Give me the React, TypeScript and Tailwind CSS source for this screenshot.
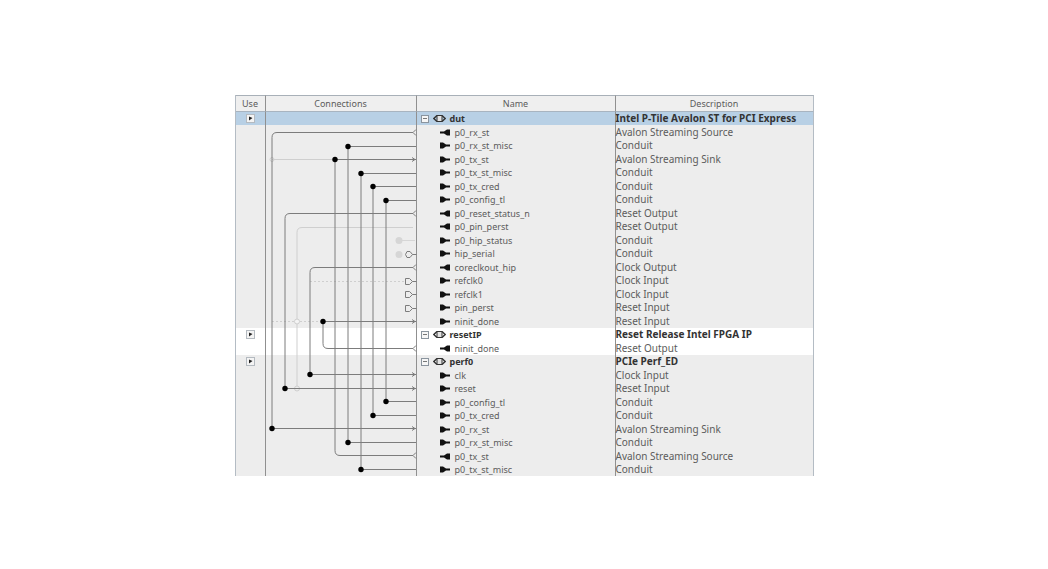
import { useState } from "react";

type Port = { name: string; desc: string; out?: boolean };
type Block = { name: string; desc: string; tone: "selected" | "plain" | "grey"; ports: Port[] };

const source = "Avalon Streaming Source";
const sink = "Avalon Streaming Sink";

const blocks: Block[] = [
  {
    name: "dut",
    desc: "Intel P-Tile Avalon ST for PCI Express",
    tone: "selected",
    ports: [
      { name: "p0_rx_st", desc: source, out: true },
      { name: "p0_rx_st_misc", desc: "Conduit" },
      { name: "p0_tx_st", desc: sink },
      { name: "p0_tx_st_misc", desc: "Conduit" },
      { name: "p0_tx_cred", desc: "Conduit" },
      { name: "p0_config_tl", desc: "Conduit" },
      { name: "p0_reset_status_n", desc: "Reset Output", out: true },
      { name: "p0_pin_perst", desc: "Reset Output", out: true },
      { name: "p0_hip_status", desc: "Conduit" },
      { name: "hip_serial", desc: "Conduit" },
      { name: "coreclkout_hip", desc: "Clock Output", out: true },
      { name: "refclk0", desc: "Clock Input" },
      { name: "refclk1", desc: "Clock Input" },
      { name: "pin_perst", desc: "Reset Input" },
      { name: "ninit_done", desc: "Reset Input" },
    ],
  },
  {
    name: "resetIP",
    desc: "Reset Release Intel FPGA IP",
    tone: "plain",
    ports: [{ name: "ninit_done", desc: "Reset Output", out: true }],
  },
  {
    name: "perf0",
    desc: "PCIe Perf_ED",
    tone: "grey",
    ports: [
      { name: "clk", desc: "Clock Input" },
      { name: "reset", desc: "Reset Input" },
      { name: "p0_config_tl", desc: "Conduit" },
      { name: "p0_tx_cred", desc: "Conduit" },
      { name: "p0_rx_st", desc: sink },
      { name: "p0_rx_st_misc", desc: "Conduit" },
      { name: "p0_tx_st", desc: source, out: true },
      { name: "p0_tx_st_misc", desc: "Conduit" },
    ],
  },
];

// Vertical centre of a row; rows alternate between 13 and 14 pixels.
const y = (row: number) => Math.floor(row * 13.5) + (row > 18 ? 6 : 7);

const RIGHT = 150;

function Wiring() {
  const rounded = (x: number, from: number, to: number) => {
    const s = to > from ? 1 : -1;
    return `M${RIGHT - 3} ${y(from)}H${x + 5}Q${x} ${y(from)} ${x} ${y(from) + 5 * s}V${y(to)}`;
  };
  const dots: [number, number][] = [
    [82, 2], [69, 3], [95, 4], [107, 5], [120, 6], [57, 15], [44, 19],
    [19, 20], [120, 21], [107, 22], [6, 23], [82, 24], [95, 26],
  ];
  return (
    <svg
      className="absolute top-0 left-0 overflow-visible"
      width="151"
      height="364"
      viewBox="0 -0.5 151 364"
      fill="none"
      aria-hidden="true"
    >
      <g stroke="#cfcfcf">
        <path d={rounded(31, 8, 20)} />
        <path d={`M6 ${y(3)}H69`} />
        <path d={`M6 ${y(15)}H57M44 ${y(12)}H138`} strokeDasharray="2 2" />
        <circle cx="31" cy={y(15)} r="2.5" fill="#f4f4f4" />
        <circle cx="31" cy={y(20)} r="2.5" fill="#ededed" />
        <circle cx="6" cy={y(3)} r="2" />
      </g>
      <g fill="#d6d6d6">
        <circle cx="133" cy={y(9)} r="3.5" />
        <circle cx="133" cy={y(10)} r="3.5" />
        <path d={`M133 ${y(9) - 0.5}h16v1h-16z`} />
      </g>
      <g stroke="#7c7c7c">
        <path d={rounded(6, 1, 23)} />
        <path d={rounded(19, 7, 20)} />
        <path d={rounded(44, 11, 19)} />
        <path d={rounded(57, 17, 15)} />
        <path d={rounded(69, 25, 3)} />
        <path d={`M${RIGHT} ${y(2)}H82V${y(24)}H${RIGHT}`} />
        <path d={`M${RIGHT} ${y(4)}H95V${y(26)}H${RIGHT}`} />
        <path d={`M${RIGHT} ${y(5)}H107V${y(22)}H${RIGHT}`} />
        <path d={`M${RIGHT} ${y(6)}H120V${y(21)}H${RIGHT}`} />
        {([[69, 3], [57, 15], [44, 19], [19, 20], [6, 23]] as const).map(([x, r]) => (
          <path key={r} d={`M${x} ${y(r)}H${RIGHT}M146 ${y(r) - 2}l3 2l-3 2`} />
        ))}
        {[1, 7, 11, 17, 25].map((r) => (
          <path key={r} d={`M150 ${y(r) - 3}l-3 3l3 3`} />
        ))}
        <path d={`M141 ${y(10) - 3}h3l2.500 3l-2.500 3h-3l-1.500-3zM146.500 ${y(10)}h4`} />
        {[12, 13, 14].map((r) => (
          <path key={r} d={`M139.500 ${y(r) - 3}h4l3 3l-3 3h-4zM146.500 ${y(r)}h4`} />
        ))}
      </g>
      <g fill="#000">
        {dots.map(([x, r]) => (
          <circle key={`${x}-${r}`} cx={x} cy={y(r)} r="2.700" />
        ))}
      </g>
    </svg>
  );
}

function PortIcon({ out }: { out?: boolean }) {
  return (
    <svg className="shrink-0" width="10" height="7" viewBox="0 0 10 7" fill="#111" aria-hidden="true">
      {out ? <path d="M10 0.500v6H7L4 4.500H0v-2h4l3-2z" /> : <path d="M0 0.500h3l3 2h4v2H6l-3 2H0z" />}
    </svg>
  );
}

function BlockIcon() {
  return (
    <svg className="shrink-0" width="13" height="9" viewBox="0 0 13 9" fill="none" stroke="#333" aria-hidden="true">
      <path d="M4 1.500L0.800 4.500L4 7.500M9 1.500l3.200 3L9 7.500" strokeWidth="1.500" />
      <rect x="4" y="1.500" width="5" height="6" fill="#e4e4e4" />
    </svg>
  );
}

const tones = { selected: "bg-[#b8d0e5]", plain: "bg-white", grey: "bg-[#ededed]" };
const cell = "p-0 border-r border-[#909090] whitespace-nowrap overflow-hidden";

function UseBox({ name }: { name: string }) {
  const [on, setOn] = useState(true);
  return (
    <label className="relative flex h-3 items-center justify-center">
      <input
        type="checkbox"
        aria-label={`Use ${name}`}
        checked={on}
        onChange={() => setOn(!on)}
        className="peer absolute inset-0 size-full opacity-0"
      />
      <svg
        className="text-transparent peer-checked:text-[#222]"
        width="9"
        height="9"
        viewBox="0 0 9 9"
        fill="none"
        aria-hidden="true"
      >
        <rect x="0.500" y="0.500" width="8" height="8" fill="#f4f4f4" stroke="#b4bac0" />
        <path d="M3 2.500v4l3.500-2.500z" fill="currentColor" />
      </svg>
    </label>
  );
}

export default function App() {
  const rows = blocks.flatMap((block) => [
    { block, port: null as Port | null },
    ...block.ports.map((port) => ({ block, port: port as Port | null })),
  ]);

  return (
    <main className="min-h-screen bg-white px-4 pt-[95px] pb-8 font-['Noto_Sans',sans-serif] text-[9px] leading-[13px] text-[#5c5c5c]">
      <table className="mx-auto w-full max-w-[579px] table-fixed border-separate border-spacing-0 border-l border-[#b4bcc4]">
        <colgroup>
          <col className="w-[30px]" />
          <col className="w-[151px]" />
          <col />
          <col className="w-[198px]" />
        </colgroup>
        <thead>
          <tr className="h-[17px] bg-[#efefef]">
            {["Use", "Connections", "Name", "Description"].map((title) => (
              <th
                key={title}
                scope="col"
                className="border-t border-r border-b border-t-[#a8b0b8] border-r-[#909090] border-b-[#a8b4c0] p-0 text-center font-normal last:border-r-[#b4bcc4]"
              >
                {title}
              </th>
            ))}
          </tr>
        </thead>
        <tbody>
          {rows.map(({ block, port }, i) => {
            const tone = port && block.tone === "selected" ? "grey" : block.tone;
            return (
              <tr key={i} className={`${tones[tone]} odd:h-[13px] even:h-[14px]`}>
                <td className={cell}>{!port && <UseBox name={block.name} />}</td>
                <td className={i === 0 ? "relative border-r border-[#909090] p-0" : cell}>
                  {i === 0 && <Wiring />}
                </td>
                <td className={cell}>
                  {port ? (
                    <div className="flex items-center gap-[5px] pl-[23px]">
                      <PortIcon out={port.out} />
                      <span>{port.name}</span>
                    </div>
                  ) : (
                    <div className="flex items-center gap-1 pl-1 font-bold text-[#333]">
                      <button
                        type="button"
                        aria-label={`Collapse ${block.name}`}
                        className="flex size-2 items-center justify-center border border-[#8a949e] bg-[#f6f6f6]"
                      >
                        <span className="h-px w-1 bg-[#777]" />
                      </button>
                      <BlockIcon />
                      <span>{block.name}</span>
                    </div>
                  )}
                </td>
                <td
                  className={`border-r border-[#b4bcc4] p-0 text-[10px] leading-[13px] whitespace-nowrap ${port ? "" : "font-bold text-[#333]"}`}
                >
                  {port ? port.desc : block.desc}
                </td>
              </tr>
            );
          })}
        </tbody>
      </table>
    </main>
  );
}
